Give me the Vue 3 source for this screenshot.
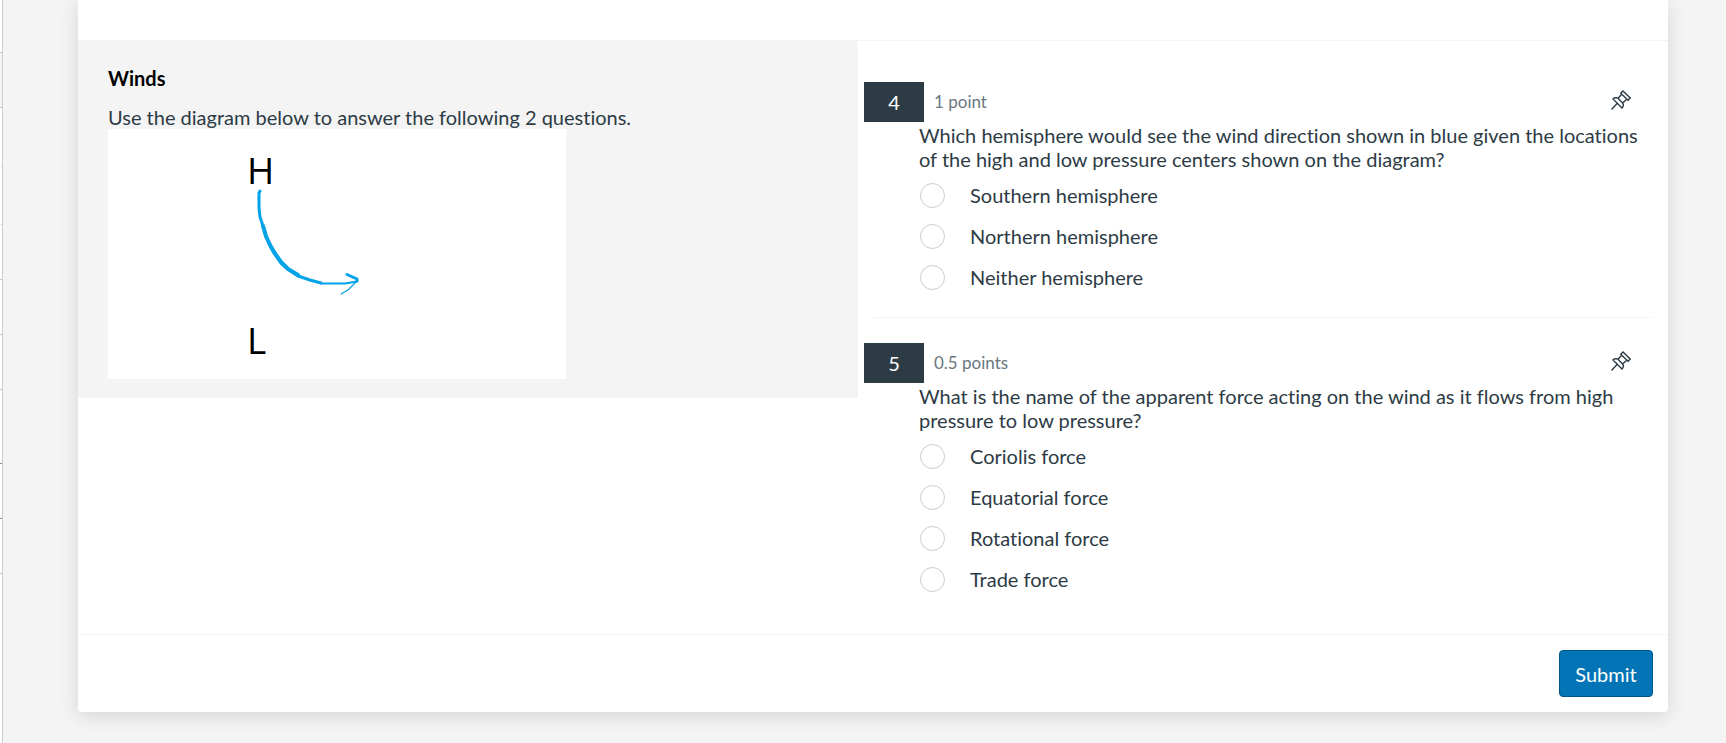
<script setup>
import { ref } from 'vue'

const navRows = [
  'first',
  'active',
  'faint tall',
  'faint',
  'item',
  'item',
  'item',
  'strong spaced',
  'strong',
  'item'
]

const questions = [
  {
    number: 4,
    points: '1 point',
    prompt:
      'Which hemisphere would see the wind direction shown in blue given the locations of the high and low pressure centers shown on the diagram?',
    options: ['Southern hemisphere', 'Northern hemisphere', 'Neither hemisphere']
  },
  {
    number: 5,
    points: '0.5 points',
    prompt:
      'What is the name of the apparent force acting on the wind as it flows from high pressure to low pressure?',
    options: ['Coriolis force', 'Equatorial force', 'Rotational force', 'Trade force']
  }
]

const answers = ref({})
</script>

<template>
  <div class="page">
    <div class="nav-edge">
      <div v-for="(row, i) in navRows" :key="i" :class="['nav-edge__row', row]"></div>
    </div>
    <main class="main">
      <form class="quiz" @submit.prevent>
        <div class="quiz__top"></div>
        <div class="quiz__group">
          <section class="stimulus">
            <h2 class="stimulus__title">Winds</h2>
            <p class="stimulus__text">Use the diagram below to answer the following 2 questions.</p>
            <svg class="diagram" viewBox="0 0 458 250">
              <text x="139" y="55">H</text>
              <text x="139" y="225">L</text>
              <g fill="none" stroke="#00a2e8" stroke-linecap="round" stroke-linejoin="round">
                <path
                  stroke-width="3"
                  d="M152 62L151 64L151 79L152 88L155 97L158 108L162 116L166 124L173 134L180 140L190 147L202 151L213 154"
                />
                <path stroke-width="4" d="M155 97L158 107L162 116L166 123L173 133L180 140L190 146" />
                <path stroke-width="2" d="M213 154.500L237 154.500L249 152.500" />
                <path stroke-width="3" d="M239 145.500L249 150L249 152" />
                <path stroke-width="1.200" d="M249 152L240 161L233 165" />
              </g>
            </svg>
          </section>
          <div class="questions">
            <fieldset v-for="q in questions" :key="q.number" class="question">
              <div class="question__header">
                <span class="question__number">{{ q.number }}</span>
                <span class="question__points">{{ q.points }}</span>
                <button type="button" class="pin" aria-label="Pin question">
                  <svg viewBox="0 0 20 20" fill="none" stroke="#2d3b45" stroke-width="1.4">
                    <path d="M0.500 19.500L6.500 13" />
                    <path
                      d="M2 9C3 7.600 5.600 7.300 7 8.300L11.500 13C12.600 14.500 12.300 16.800 11 18Z"
                    />
                    <path d="M7 8.300L10.500 4.500M11.500 13L15.500 9.500" />
                    <path d="M9.800 3.200L12 1L19.200 8L17 10.200Z" />
                  </svg>
                </button>
              </div>
              <p :id="'prompt-' + q.number" class="question__prompt">{{ q.prompt }}</p>
              <div class="options" role="radiogroup" :aria-labelledby="'prompt-' + q.number">
                <label v-for="option in q.options" :key="option" class="option">
                  <input
                    v-model="answers[q.number]"
                    type="radio"
                    :name="'question-' + q.number"
                    :value="option"
                  />
                  <span class="option__text">{{ option }}</span>
                </label>
              </div>
            </fieldset>
          </div>
        </div>
        <div class="quiz__footer">
          <button type="submit" class="submit">Submit</button>
        </div>
      </form>
    </main>
  </div>
</template>

<style>
body {
  margin: 0;
  background-color: #f4f4f4;
}
</style>

<style scoped>
.page {
  display: flex;
  min-height: 100vh;
  font-family: Lato, 'Liberation Sans', sans-serif;
  font-size: 20px;
  font-variant-ligatures: none;
  line-height: 24px;
  color: #2d3b45;
}

.page *,
.page {
  box-sizing: border-box;
}

.nav-edge {
  flex: 0 0 3px;
  border-right: 1px solid #c7cdd1;
  background-color: #fff;
}

.nav-edge__row {
  height: 55px;
  border-bottom: 1px solid #c7c7c7;
}

.nav-edge__row.first {
  height: 53px;
}

.nav-edge__row.active {
  background-color: #f4f4f4;
}

.nav-edge__row.faint {
  height: 58px;
  border-color: #e8eaec;
}

.nav-edge__row.tall {
  height: 59px;
}

.nav-edge__row.strong {
  border-color: #8f8f8f;
}

.nav-edge__row.spaced {
  height: 74px;
}

.main {
  flex: 1;
  min-width: 0;
  padding: 0 58px 31px 75px;
}

.quiz {
  background-color: #fff;
  border-radius: 0 0 4px 4px;
  box-shadow: 0 4px 20px rgba(0, 0, 0, 0.13);
}

.quiz__top {
  height: 40px;
}

.quiz__group {
  display: grid;
  grid-template-columns: calc(50% - 15px) 1fr;
  align-items: start;
  border-top: 1px solid #f4f4f4;
  border-bottom: 1px solid #f4f4f4;
}

.stimulus {
  padding: 25px 30px 19px;
  background-color: #f4f4f4;
}

.stimulus__title {
  margin: 0 0 15px;
  font-size: 20px;
  line-height: 24px;
  font-weight: 700;
  color: #000;
}

.stimulus__text {
  margin: 0;
}

.diagram {
  display: block;
  width: 458px;
  max-width: 100%;
  background-color: #fff;
}

.diagram text {
  font-family: 'Open Sans', 'Noto Sans', sans-serif;
  font-size: 37px;
  font-weight: 500;
  fill: #000;
}

.questions {
  padding: 16px 15px 15px 6px;
}

.question {
  min-width: 0;
  margin: 0;
  padding: 25px 0 19px;
  border: 0;
}

.question:not(:last-child)::after {
  content: '';
  display: block;
  height: 1px;
  margin: 19px 0 -20px 9px;
  background-color: #f4f4f4;
}

.question:not(:first-child) {
  padding-top: 26px;
}

.question__header {
  display: flex;
  align-items: center;
  height: 40px;
}

.question__number {
  width: 60px;
  line-height: 40px;
  text-align: center;
  color: #fff;
  background-color: #2d3b45;
}

.question__points {
  flex: 1;
  margin-left: 10px;
  font-size: 17px;
  color: #6b7780;
}

.pin {
  width: 20px;
  height: 20px;
  margin: 0 22px 4px 0;
  padding: 0;
  border: 0;
  background: none;
  cursor: pointer;
}

.pin svg {
  display: block;
}

.question__prompt {
  margin: 1px 12px 4px 55px;
}

.options {
  margin-left: 56px;
}

.option {
  display: flex;
  align-items: center;
  gap: 25px;
  height: 41px;
  cursor: pointer;
}

.option input {
  appearance: none;
  flex: none;
  width: 25px;
  height: 25px;
  margin: 0;
  border: 1px solid #c7cdd1;
  border-radius: 50%;
  background-color: #fff;
  cursor: pointer;
}

.option input:checked {
  border: 7px solid #2d3b45;
}

.option__text {
  padding-bottom: 2px;
}

.quiz__footer {
  display: flex;
  justify-content: flex-end;
  padding: 15px;
}

.submit {
  min-width: 94px;
  height: 47px;
  padding: 0 15px;
  border: 1px solid #00568a;
  border-radius: 4px;
  font-family: inherit;
  font-size: 20px;
  color: #fff;
  background-color: #0374b5;
  cursor: pointer;
}

.submit:hover {
  background-color: #0268a3;
}
</style>
